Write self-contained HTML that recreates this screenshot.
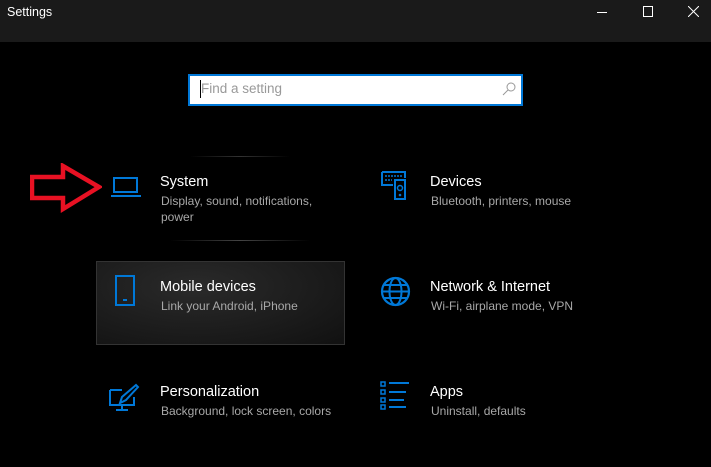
<!DOCTYPE html>
<html><head><style>
body{margin:0;width:711px;height:467px;background:#000;overflow:hidden;font-family:"Segoe UI","Liberation Sans",sans-serif;position:relative}
.tb{position:absolute;left:0;top:0;width:711px;height:42px;background:#1a1a1a}
.t{position:absolute;color:#fff;font-size:13px}
.s{position:absolute;color:#a8a8a8;font-size:12px;line-height:16px}
.h{position:absolute;color:#fff;font-size:14.5px}
svg{position:absolute}
</style></head><body>
<div class="tb"></div>
<div class="t" style="left:7px;top:5px;font-size:12.5px">Settings</div>
<div style="position:absolute;left:597px;top:12px;width:10px;height:1px;background:#fff"></div>
<div style="position:absolute;left:643px;top:6px;width:8px;height:9px;border:1px solid #fff"></div>
<svg style="left:688px;top:6px" width="11" height="11"><path d="M0 0L11 11M11 0L0 11" stroke="#fff" stroke-width="1"/></svg>
<div style="position:absolute;left:188px;top:74px;width:331px;height:28px;border:2px solid #0078d7;background:#fff"></div>
<div style="position:absolute;left:200px;top:80px;width:1px;height:18px;background:#000"></div>
<div style="position:absolute;left:201px;top:81px;color:#999;font-size:13.5px">Find a setting</div>
<svg style="left:502px;top:82px" width="14" height="14"><circle cx="9" cy="5" r="4" fill="none" stroke="#999"/><path d="M6 8L1 13" stroke="#999"/></svg>

<div style="position:absolute;left:190px;top:156px;width:100px;height:1px;background:linear-gradient(90deg,#000,#333,#000)"></div>
<div style="position:absolute;left:170px;top:240px;width:140px;height:1px;background:linear-gradient(90deg,#000,#444,#000)"></div>
<svg style="left:30px;top:163px" width="72" height="50"><path d="M2 14H33V3L69 24L33 46V35H2Z" fill="none" stroke="#e81123" stroke-width="4.5"/></svg>
<svg style="left:110px;top:176px" width="32" height="22"><path d="M4 2H27V16H4Z" fill="none" stroke="#0078d7" stroke-width="2"/><path d="M1 20H31" stroke="#0078d7" stroke-width="2"/></svg>
<div class="h" style="left:160px;top:174px">System</div>
<div class="s" style="left:161px;top:193px">Display, sound, notifications,<br>power</div>

<div style="position:absolute;left:96px;top:261px;width:249px;height:84px;border:1px solid #333;background:radial-gradient(ellipse at 40% 30%,#2a2a2a,#111);box-sizing:border-box"></div>
<svg style="left:115px;top:275px" width="22" height="32"><rect x="1" y="1" width="18" height="29" fill="none" stroke="#0078d7" stroke-width="2"/><rect x="8" y="24" width="4" height="2" fill="#0078d7"/></svg>
<div class="h" style="left:160px;top:279px">Mobile devices</div>
<div class="s" style="left:161px;top:298px">Link your Android, iPhone</div>

<svg style="left:108px;top:383px" width="32" height="30"><path d="M2 7H14M26 14V22H2V7" fill="none" stroke="#0078d7" stroke-width="2"/><path d="M8 27H20M14 22V27" stroke="#0078d7" stroke-width="2"/><path d="M12 20L14 14L28 2L30 4L18 17Z" fill="none" stroke="#0078d7" stroke-width="2"/></svg>
<div class="h" style="left:160px;top:384px">Personalization</div>
<div class="s" style="left:161px;top:403px">Background, lock screen, colors</div>

<svg style="left:380px;top:170px" width="32" height="32"><path d="M2 2H25V8M2 2V15H13" fill="none" stroke="#0078d7" stroke-width="2"/><rect x="15" y="10" width="10" height="19" fill="none" stroke="#0078d7" stroke-width="2"/><circle cx="20" cy="18" r="2.5" fill="none" stroke="#0078d7" stroke-width="1.5"/><circle cx="20" cy="25" r="1.3" fill="#0078d7"/><path d="M5 6H22M5 10H12" stroke="#0078d7" stroke-width="1.5" stroke-dasharray="2 1"/></svg>
<div class="h" style="left:430px;top:174px">Devices</div>
<div class="s" style="left:431px;top:193px">Bluetooth, printers, mouse</div>

<svg style="left:380px;top:276px" width="32" height="32"><circle cx="15.5" cy="15.5" r="13.5" fill="none" stroke="#0078d7" stroke-width="2.2"/><ellipse cx="15.5" cy="15.5" rx="6" ry="13.5" fill="none" stroke="#0078d7" stroke-width="2"/><path d="M2 15.5H29M4 9H27M4 22H27" stroke="#0078d7" stroke-width="2"/></svg>
<div class="h" style="left:430px;top:279px">Network &amp; Internet</div>
<div class="s" style="left:431px;top:298px">Wi-Fi, airplane mode, VPN</div>

<svg style="left:380px;top:381px" width="32" height="30"><g fill="none" stroke="#0078d7" stroke-width="1.5"><rect x="1" y="1" width="4" height="4"/><rect x="1" y="9" width="4" height="4"/><rect x="1" y="17" width="4" height="4"/><rect x="1" y="24" width="4" height="4"/></g><path d="M9 2H29M9 11H26M9 19H24M9 26H26" stroke="#0078d7" stroke-width="2"/></svg>
<div class="h" style="left:430px;top:384px">Apps</div>
<div class="s" style="left:431px;top:403px">Uninstall, defaults</div>
</body></html>
